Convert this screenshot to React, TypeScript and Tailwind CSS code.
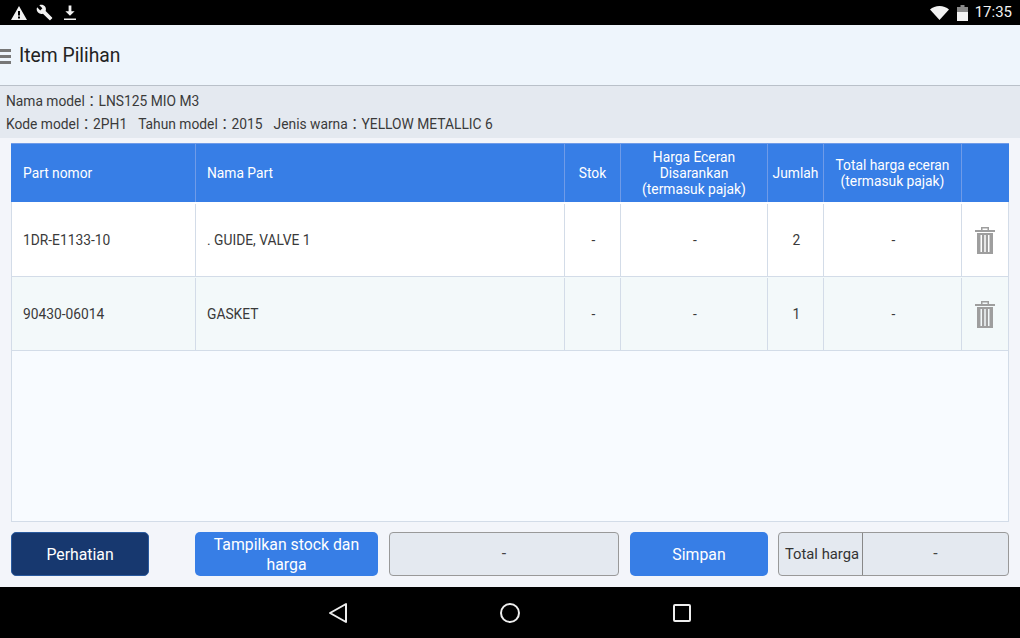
const headCols = "grid grid-cols-[185px_369px_56px_147px_56px_138px_47px]";
const rowCols = "grid grid-cols-[184px_369px_56px_147px_56px_138px_47px]";

function Trash() {
  return (
    <svg width="20" height="27" viewBox="0 0 20 27" fill="#9e9e9e">
      <path d="M6 0h8v3h6v2H0V3h6zM7.500 1.500V3h5V1.500z" fillRule="evenodd" />
      <path d="M2 6h16v21H2zM5.500 8v17H7V8zM9.250 8v17h1.500V8zM13 8v17h1.500V8z" fillRule="evenodd" />
    </svg>
  );
}

function Row({ no, name, qty, bg, size }: { no: string; name: string; qty: string; bg: string; size: string }) {
  const cell = "flex items-center justify-center border-r border-[#d3dce8] pl-[2px]";
  return (
    <div className={`${rowCols} -mx-px border-x border-b border-[#d3dce8] text-[13.800px] text-[#3a3a3a] ${size} ${bg}`}>
      <div className="flex items-center border-r border-[#d3dce8] pl-[11px]">{no}</div>
      <div className="flex items-center border-r border-[#d3dce8] pl-[11px]">{name}</div>
      <div className={cell}>-</div>
      <div className={cell}>-</div>
      <div className={cell}>{qty}</div>
      <div className={cell}>-</div>
      <div className="flex items-center justify-center pr-[2px]"><Trash /></div>
    </div>
  );
}

export default function App() {
  const head = "flex items-center justify-center text-center border-r border-[#6f9be8] leading-[16px]";
  return (
    <div className="flex h-[638px] w-[1020px] flex-col overflow-hidden bg-black font-['Roboto','Noto_Sans_CJK_JP',sans-serif]">
      {/* status bar */}
      <div className="flex h-[25px] shrink-0 items-center justify-between pl-[11px] pr-2 text-white">
        <div className="flex items-center">
          <svg width="16" height="14" viewBox="0 0 16 14" fill="#f2f2f2">
            <path d="M8 0l8 14H0zM7 5v4.500h2V5zM7 10.500v2h2v-2z" fillRule="evenodd" />
          </svg>
          <svg width="17" height="17" viewBox="0 0 24 24" fill="#f2f2f2" className="ml-[9px]">
            <path d="M22.700 19l-9.100-9.100c.9-2.300.4-5-1.500-6.900-2-2-5-2.400-7.400-1.300L9 6 6 9 1.600 4.700C.4 7.100.9 10.100 2.900 12.100c1.900 1.900 4.600 2.400 6.900 1.500l9.100 9.100c.4.400 1 .4 1.400 0l2.300-2.300c.5-.4.5-1.100.1-1.400z" />
          </svg>
          <svg width="12" height="16" viewBox="0 0 13 16" fill="#f2f2f2" className="ml-[11px]">
            <path d="M5 0h3v6h3.500l-5 5-5-5H5zM0 14h13v1.500H0z" />
          </svg>
        </div>
        <div className="flex items-center">
          <svg width="19" height="14" viewBox="0 0 19 14" fill="#f2f2f2" className="mr-[8px]">
            <path d="M9.500 14L0 3.500C2.500 1.300 5.800 0 9.500 0S16.500 1.300 19 3.500z" />
          </svg>
          <svg width="11" height="16" viewBox="0 0 11 16" className="mr-[7px]">
            <path d="M3.500 0h4v2H11v14H0V2h3.500z" fill="#8a8a8a" />
            <path d="M0 7h11v9H0z" fill="#f2f2f2" />
          </svg>
          <span className="text-[15px] leading-none text-[#f2f2f2]">17:35</span>
        </div>
      </div>

      {/* title */}
      <div className="flex h-[61px] shrink-0 items-center border-b border-[#b9c0c9] bg-[#eef5fc] pt-[3px]">
        <div className="flex h-[15px] w-[11px] flex-col justify-between">
          <div className="h-[3px] bg-[#777]" />
          <div className="h-[3px] bg-[#777]" />
          <div className="h-[3px] bg-[#777]" />
        </div>
        <span className="ml-[8px] text-[19.300px] text-[#222]">Item Pilihan</span>
      </div>

      {/* model info */}
      <div className="flex h-[52px] shrink-0 flex-col justify-center gap-[3px] bg-[#e4e9f0] pl-[6px] text-[13.800px] leading-[20px] text-[#3a3a3a]">
        <div>Nama model：LNS125 MIO M3</div>
        <div className="flex gap-[11px]">
          <span>Kode model：2PH1</span>
          <span>Tahun model：2015</span>
          <span>Jenis warna：YELLOW METALLIC 6</span>
        </div>
      </div>

      {/* table */}
      <div className="flex min-h-0 flex-1 flex-col bg-[#f3f5fa] px-[11px] pt-[5px]">
        <div className="h-[379px] shrink-0 border-x border-b border-[#d3dce8] bg-[#f8fbff]">
          <div className={`${headCols} -mx-px h-[59px] border-t border-[#6f9be8] bg-[#377ee6] text-[13.800px] text-white`}>
            <div className="flex items-center border-r border-[#6f9be8] pl-[12px]">Part nomor</div>
            <div className="flex items-center border-r border-[#6f9be8] pl-[11px]">Nama Part</div>
            <div className={head}>Stok</div>
            <div className={head}>Harga Eceran<br />Disarankan<br />(termasuk pajak)</div>
            <div className={head}>Jumlah</div>
            <div className={head}>Total harga eceran<br />(termasuk pajak)</div>
            <div />
          </div>
          <Row no="1DR-E1133-10" name=". GUIDE, VALVE 1" qty="2" bg="bg-white" size="h-[75px] pt-[2px]" />
          <Row no="90430-06014" name="GASKET" qty="1" bg="bg-[#f3f9fa]" size="h-[74px] pt-[1px]" />
        </div>

        {/* bottom buttons */}
        <div className="mt-[10px] flex h-[44px] shrink-0 text-[15.800px]">
          <button className="h-full w-[138px] rounded-[5px] border border-[#2a5a9e] bg-[#17386f] pt-[1px] text-white">Perhatian</button>
          <button className="ml-[46px] h-full w-[183px] rounded-[5px] bg-[#377ee6] px-2 pt-[2px] leading-[20px] text-white">Tampilkan stock dan harga</button>
          <div className="ml-[11px] flex h-full w-[230px] items-center justify-center rounded-[4px] border border-[#999] bg-[#e4e9f0] text-[#444]">-</div>
          <button className="ml-[11px] h-full w-[138px] rounded-[5px] bg-[#377ee6] pt-[1px] text-white">Simpan</button>
          <div className="ml-[10px] flex h-full w-[231px] items-center rounded-[4px] border border-[#999] bg-[#e4e9f0] text-[#333]">
            <span className="flex h-full w-[84px] items-center justify-center border-r border-[#888] pl-[3px] pt-[1px] text-[14.800px]">Total harga</span>
            <span className="flex-1 text-center text-[#444]">-</span>
          </div>
        </div>
      </div>

      {/* nav bar */}
      <div className="flex h-[51px] shrink-0 items-center bg-black pl-[328px]">
        <svg width="20" height="22" viewBox="0 0 20 22" fill="none" stroke="#eee" strokeWidth="2" strokeLinejoin="round">
          <path d="M2 11L18 2v18z" />
        </svg>
        <svg width="22" height="22" viewBox="0 0 22 22" fill="none" stroke="#eee" strokeWidth="2" className="ml-[151px]">
          <circle cx="11" cy="11" r="9" />
        </svg>
        <svg width="18" height="18" viewBox="0 0 18 18" fill="none" stroke="#eee" strokeWidth="2" className="ml-[152px]">
          <rect x="1" y="1" width="16" height="16" rx="1" />
        </svg>
      </div>
    </div>
  );
}
